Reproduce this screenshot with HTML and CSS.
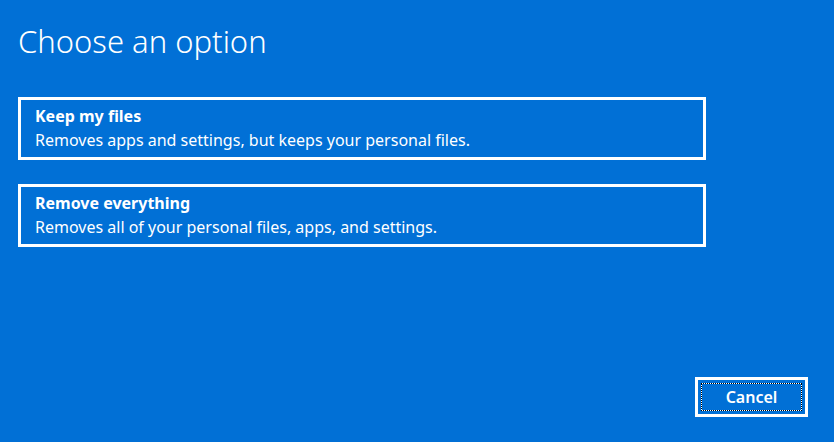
FILE: index.html
```html
<!doctype html>
<html lang="en">
  <head>
    <meta charset="UTF-8" />
    <title>Choose an option</title>
    <link rel="stylesheet" href="styles.css">
  </head>
  <body>
    <div class="page">
      <h1>Choose an option</h1>

      <div class="options">
        <div class="option">
          <div class="option-title">Keep my files</div>
          <div class="option-desc">Removes apps and settings, but keeps your personal files.</div>
        </div>
        <div class="option">
          <div class="option-title">Remove everything</div>
          <div class="option-desc">Removes all of your personal files, apps, and settings.</div>
        </div>
      </div>

      <div class="footer">
        <button class="cancel"><span class="focus">Cancel</span></button>
      </div>
    </div>
  </body>
</html>
```

FILE: styles.css
```css
body {
  margin: 0;
  background: #0170d6;
  color: #fff;
  font-family: "Noto Sans", "Open Sans", sans-serif;
}

.page {
  height: 100vh;
  box-sizing: border-box;
  padding: 0 26px 25px 18px;
  display: flex;
  flex-direction: column;
}

h1 {
  font-size: 31px;
  font-weight: 300;
  margin: 18px 0 0 0;
  line-height: 46px;
}

.options {
  display: flex;
  flex-direction: column;
  gap: 24px;
  margin-top: 33px;
  width: 688px;
}

.option {
  border: 3px solid #fff;
  padding: 4px 14px 0 14px;
  box-sizing: border-box;
  height: 63px;
}

.option-title {
  font-size: 16px;
  font-weight: 700;
  line-height: 24px;
}

.option-desc {
  font-size: 16px;
  line-height: 24px;
}

.footer {
  margin-top: auto;
  display: flex;
  justify-content: flex-end;
}

.cancel {
  width: 113px;
  height: 40px;
  border: 3px solid #fff;
  background: #0170d6;
  color: #fff;
  font-family: "Noto Sans", sans-serif;
  font-size: 16px;
  font-weight: 600;
  padding: 3px;
  display: flex;
}

.focus {
  flex: 1;
  display: flex;
  align-items: center;
  justify-content: center;
  position: relative;
  border: 1px solid #fff;
}

.focus::after {
  content: "";
  position: absolute;
  inset: -1px;
  border: 1px dotted #000;
}
```
